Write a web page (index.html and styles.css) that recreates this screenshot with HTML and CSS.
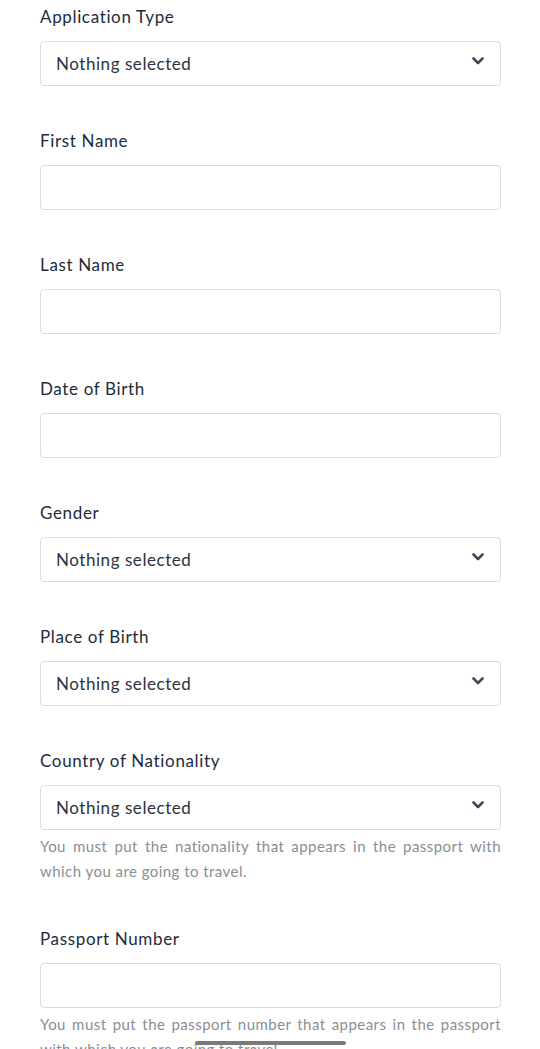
FILE: index.html
```html
<!DOCTYPE html>
<html lang="en">

<head>
    <meta charset="UTF-8">
    <meta name="viewport" content="width=device-width, initial-scale=1.0">
    <title>Application</title>
    <link rel="stylesheet" href="styles.css">
</head>

<body>
    <form class="form">
        <div class="form-group">
            <label class="label">Application Type</label>
            <div class="field select">
                <span>Nothing selected</span>
                <svg class="caret" width="12" height="8" viewBox="0 0 12 8"><path d="M1.5 1.5 6 6l4.5-4.5" fill="none" stroke="#3b4a5c" stroke-width="2.6" stroke-linecap="round" stroke-linejoin="round"/></svg>
            </div>
        </div>
        <div class="form-group">
            <label class="label">First Name</label>
            <input class="field" type="text">
        </div>
        <div class="form-group">
            <label class="label">Last Name</label>
            <input class="field" type="text">
        </div>
        <div class="form-group">
            <label class="label">Date of Birth</label>
            <input class="field" type="text">
        </div>
        <div class="form-group">
            <label class="label">Gender</label>
            <div class="field select">
                <span>Nothing selected</span>
                <svg class="caret" width="12" height="8" viewBox="0 0 12 8"><path d="M1.5 1.5 6 6l4.5-4.5" fill="none" stroke="#3b4a5c" stroke-width="2.6" stroke-linecap="round" stroke-linejoin="round"/></svg>
            </div>
        </div>
        <div class="form-group">
            <label class="label">Place of Birth</label>
            <div class="field select">
                <span>Nothing selected</span>
                <svg class="caret" width="12" height="8" viewBox="0 0 12 8"><path d="M1.5 1.5 6 6l4.5-4.5" fill="none" stroke="#3b4a5c" stroke-width="2.6" stroke-linecap="round" stroke-linejoin="round"/></svg>
            </div>
        </div>
        <div class="form-group">
            <label class="label">Country of Nationality</label>
            <div class="field select">
                <span>Nothing selected</span>
                <svg class="caret" width="12" height="8" viewBox="0 0 12 8"><path d="M1.5 1.5 6 6l4.5-4.5" fill="none" stroke="#3b4a5c" stroke-width="2.6" stroke-linecap="round" stroke-linejoin="round"/></svg>
            </div>
            <p class="help">You must put the nationality that appears in the passport with which you are going to travel.</p>
        </div>
        <div class="form-group">
            <label class="label">Passport Number</label>
            <input class="field" type="text">
            <p class="help">You must put the passport number that appears in the passport with which you are going to travel.</p>
        </div>
    </form>
    <div class="home-bar"></div>
</body>

</html>
```

FILE: styles.css
```css
* {
    padding: 0;
    margin: 0;
    box-sizing: border-box;
}

body {
    background-color: #fff;
    font-family: Lato, "Open Sans", sans-serif;
    color: #1f2e3d;
    overflow: hidden;
}

.form {
    padding: 5px 39px 0 40px;
}

.form-group {
    margin-bottom: 43px;
}

.label {
    display: block;
    height: 24px;
    line-height: 24px;
    margin-bottom: 12px;
    font-size: 17px;
    letter-spacing: 0.65px;
    color: #1c2c3e;
}

.field {
    display: block;
    width: 100%;
    height: 45px;
    border: 1px solid #dcdcdc;
    border-radius: 4px;
    background-color: #fff;
    outline: none;
    padding: 0 15px;
    font-family: inherit;
    font-size: 17px;
    letter-spacing: 0.55px;
    color: #2a3441;
}

.select {
    display: flex;
    align-items: center;
    justify-content: space-between;
    padding-right: 16px;
}

.select .caret {
    margin-top: -6px;
}

.help {
    margin-top: 4px;
    font-size: 15px;
    line-height: 25px;
    letter-spacing: 0.45px;
    color: #8a8e94;
    text-align: justify;
}

.home-bar {
    position: fixed;
    left: 195px;
    bottom: 4px;
    width: 151px;
    height: 4px;
    border-radius: 2px;
    background-color: #7a7a7a;
}
```
